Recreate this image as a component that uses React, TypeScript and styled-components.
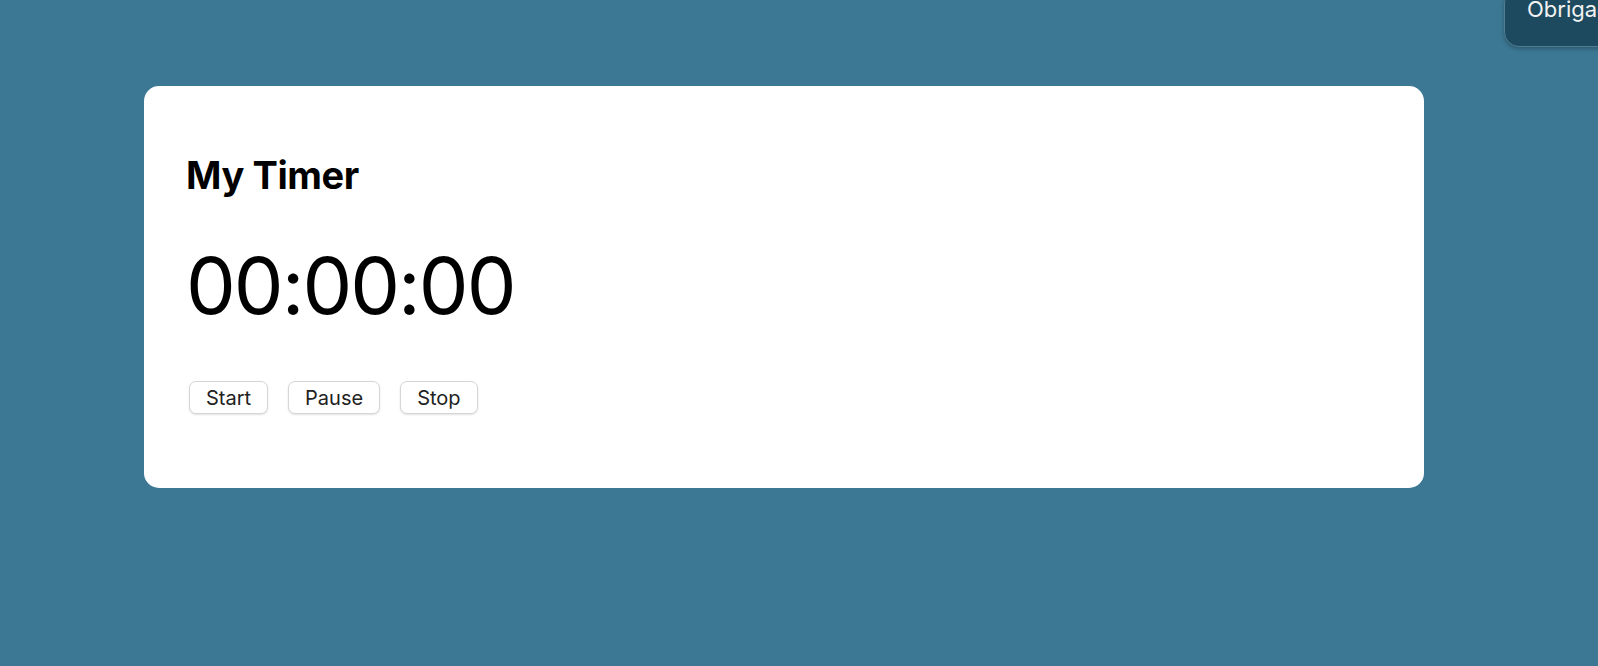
import React from 'react';
import styled, { createGlobalStyle } from 'styled-components';

const GlobalStyle = createGlobalStyle`
    html, body {
        margin: 0;
        padding: 0;
        background: #3c7894;
        overflow: hidden;
        font-family: Inter, "Noto Sans", sans-serif;
    }
    #root {
        min-height: 100vh;
    }
`;

const Page = styled.div`
    position: relative;
    min-height: 666px;
    padding: 86px 0 0 144px;
    box-sizing: border-box;
`;

const Card = styled.section`
    width: 1280px;
    box-sizing: border-box;
    padding: 66px 42px 74px;
    background: #fff;
    border-radius: 15px;
    display: flex;
    flex-direction: column;
`;

const Title = styled.h1`
    margin: 0;
    font-size: 38px;
    font-weight: 700;
    color: #000;
    letter-spacing: -0.4px;
`;

const Clock = styled.div`
    margin-top: 37px;
    font-size: 79px;
    font-weight: 400;
    color: #000;
    letter-spacing: -2px;
    line-height: 100px;
`;

const Controls = styled.div`
    display: flex;
    gap: 20px;
    margin-top: 46px;
    padding-left: 3px;
`;

const Button = styled.button`
    height: 33px;
    padding: 1px 16px 0;
    background: #fff;
    border: 1px solid #d6d6d6;
    border-radius: 7px;
    box-shadow: 0 1px 2px rgba(0, 0, 0, 0.12);
    font-family: Inter, "Noto Sans", sans-serif;
    font-size: 20px;
    color: #222;
    cursor: pointer;
`;

const Toast = styled.div`
    position: absolute;
    top: -12px;
    left: 1504px;
    height: 59px;
    box-sizing: border-box;
    padding: 7px 22px 0;
    background: #1e4a60;
    border: 1px solid #4f7d92;
    border-radius: 15px;
    box-shadow: 0 2px 4px rgba(0, 0, 0, 0.25);
    color: #f2f2f2;
    font-size: 22px;
    line-height: 26px;
    white-space: nowrap;
`;

export default function App() {
    return (
        <Page>
            <GlobalStyle />
            <Card>
                <Title>My Timer</Title>
                <Clock>00:00:00</Clock>
                <Controls>
                    <Button>Start</Button>
                    <Button>Pause</Button>
                    <Button>Stop</Button>
                </Controls>
            </Card>
            <Toast>Obrigado!</Toast>
        </Page>
    );
}
